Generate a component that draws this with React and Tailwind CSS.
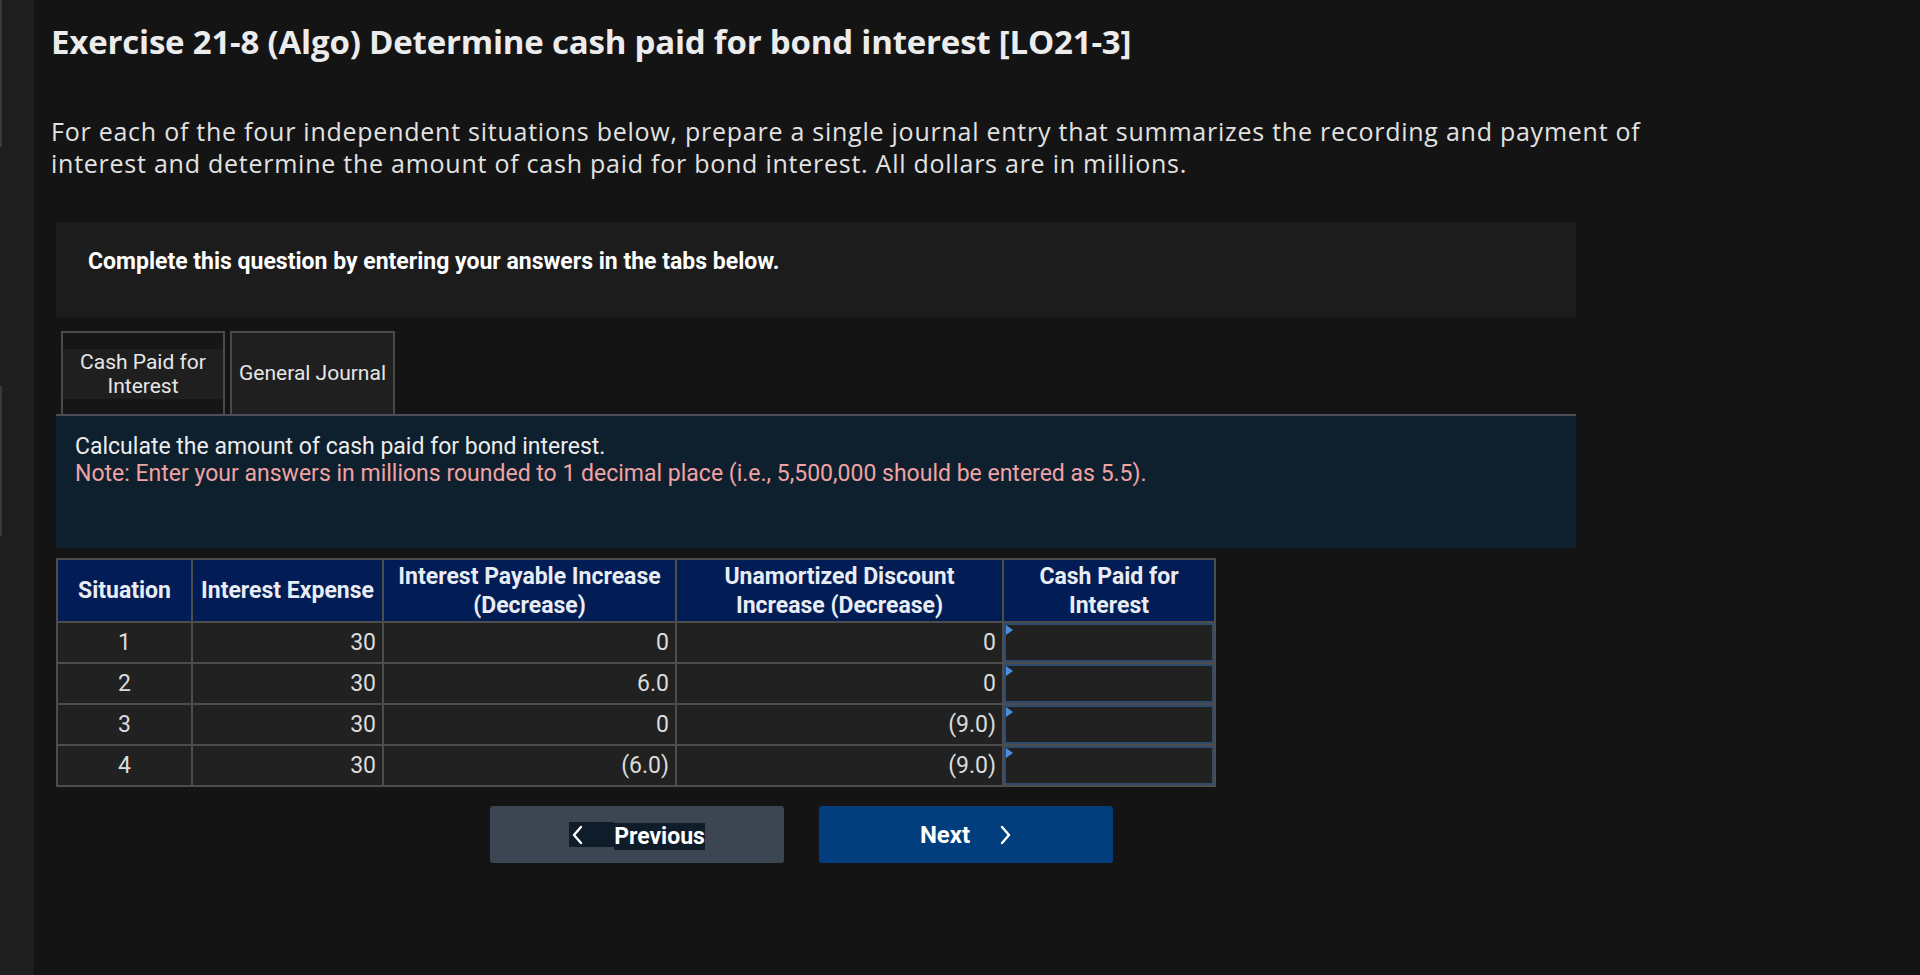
import React from 'react'

const rows = [
  { situation: '1', expense: '30', payable: '0', discount: '0' },
  { situation: '2', expense: '30', payable: '6.0', discount: '0' },
  { situation: '3', expense: '30', payable: '0', discount: '(9.0)' },
  { situation: '4', expense: '30', payable: '(6.0)', discount: '(9.0)' },
]

const Chevron = ({ dir = 'left' }) => (
  <svg width="14" height="22" viewBox="0 0 14 22" fill="none" stroke="currentColor" strokeWidth="2.4" strokeLinecap="round" strokeLinejoin="round">
    {dir === 'left' ? <polyline points="10,3 3,11 10,19" /> : <polyline points="4,3 11,11 4,19" />}
  </svg>
)

const App = () => {
  return (
    <div className="flex min-h-[975px] w-full bg-[#141414]">
      {/* left rail */}
      <aside className="relative w-[34px] shrink-0 bg-[#1e1e1e]">
        <div className="absolute left-0 top-0 h-[147px] w-[2px] bg-[#3a3a3a]" />
        <div className="absolute left-0 top-[386px] h-[150px] w-[2px] bg-[#3a3a3a]" />
      </aside>

      <main className="flex-1 pl-[17px] pt-[22px]">
        <h1 className="font-['Open_Sans',sans-serif] text-[33px] font-bold leading-[40px] tracking-[-0.2px] text-[#ececec]">
          Exercise 21-8 (Algo) Determine cash paid for bond interest [LO21-3]
        </h1>

        <p className="mt-[53px] font-['Open_Sans',sans-serif] text-[25px] leading-[32px] tracking-[0.75px] text-[#e2e2e2]">
          For each of the four independent situations below, prepare a single journal entry that summarizes the recording and payment of
          <br />
          interest and determine the amount of cash paid for bond interest. All dollars are in millions.
        </p>

        <div className="ml-[5px] w-[1520px] font-['Roboto',sans-serif]">
          {/* instructions */}
          <div className="mt-[43px] h-[95px] bg-[#1c1c1c] pl-[32px] pt-[25px]">
            <p className="text-[23px] font-bold leading-[30px] text-white">
              Complete this question by entering your answers in the tabs below.
            </p>
          </div>

          {/* tabs */}
          <div className="mt-[14px] flex gap-[5px] pl-[5px]">
            <div className="flex h-[83px] w-[164px] items-center border-x-2 border-t-2 border-[#4a4a4a] bg-[#161616]">
              <div className="flex h-[50px] w-full flex-col items-center justify-center bg-[#1f1f1f] text-[21px] leading-[24px] text-[#e6e6e6]">
                <span>Cash Paid for</span>
                <span>Interest</span>
              </div>
            </div>
            <div className="flex h-[83px] w-[165px] items-center justify-center border-x-2 border-t-2 border-[#4a4a4a] bg-[#1f1f1f] text-[21px] text-[#e6e6e6]">
              General Journal
            </div>
          </div>

          {/* panel */}
          <div className="h-[134px] border-t-2 border-[#4a4f55] bg-[#0e1f2e] pl-[19px] pt-[17px] text-[23px] leading-[27px]">
            <p className="text-[#ececec]">Calculate the amount of cash paid for bond interest.</p>
            <p className="text-[#f0a3a3]">Note: Enter your answers in millions rounded to 1 decimal place (i.e., 5,500,000 should be entered as 5.5).</p>
          </div>

          {/* table */}
          <table className="mt-[10px] w-[1158px] table-fixed border-collapse text-[23px]">
            <colgroup>
              <col className="w-[135px]" />
              <col className="w-[191px]" />
              <col className="w-[293px]" />
              <col className="w-[327px]" />
              <col className="w-[212px]" />
            </colgroup>
            <thead>
              <tr className="h-[63px] bg-[#021d55] leading-[29px] text-[#e8ecf4]">
                <th className="border-2 border-[#4d4d4d] px-1 font-bold">Situation</th>
                <th className="border-2 border-[#4d4d4d] px-1 font-bold">Interest Expense</th>
                <th className="border-2 border-[#4d4d4d] px-1 font-bold">
                  Interest Payable Increase
                  <br />
                  (Decrease)
                </th>
                <th className="border-2 border-[#4d4d4d] px-1 font-bold">
                  Unamortized Discount
                  <br />
                  Increase (Decrease)
                </th>
                <th className="border-2 border-[#4d4d4d] px-1 font-bold">
                  Cash Paid for
                  <br />
                  Interest
                </th>
              </tr>
            </thead>
            <tbody>
              {rows.map((row) => (
                <tr key={row.situation} className="h-[41px] bg-[#212121] leading-[28px] text-[#dcdcdc]">
                  <td className="border-2 border-[#4d4d4d] text-center">{row.situation}</td>
                  <td className="border-2 border-[#4d4d4d] pr-[6px] text-right">{row.expense}</td>
                  <td className="border-2 border-[#4d4d4d] pr-[6px] text-right">{row.payable}</td>
                  <td className="border-2 border-[#4d4d4d] pr-[6px] text-right">{row.discount}</td>
                  <td className="relative border-2 border-[#4d4d4d] p-0">
                    <div className="h-[39px] w-full border-2 border-[#2f4b6e] bg-[#212121]" />
                    <div className="absolute left-[2px] top-[2px] h-0 w-0 border-y-[5px] border-l-[7px] border-y-transparent border-l-[#4a8fdc]" />
                  </td>
                </tr>
              ))}
            </tbody>
          </table>

          {/* nav buttons */}
          <div className="mt-[19px] flex gap-[35px] pl-[434px]">
            <button className="flex h-[57px] w-[294px] items-center justify-center rounded-[3px] bg-[#3c4653] text-[23px] font-bold text-white">
              <span className="flex h-[25px] w-[45px] items-center bg-[#0f1c2a] pl-[2px]">
                <Chevron dir="left" />
              </span>
              <span className="mt-[4px] bg-[#0f1c2a] leading-[27px]">Previous</span>
            </button>
            <button className="flex h-[57px] w-[294px] items-center justify-center gap-[28px] rounded-[3px] bg-[#023e7d] text-[24px] font-bold text-white">
              <span>Next</span>
              <Chevron dir="right" />
            </button>
          </div>
        </div>
      </main>
    </div>
  )
}

export default App
